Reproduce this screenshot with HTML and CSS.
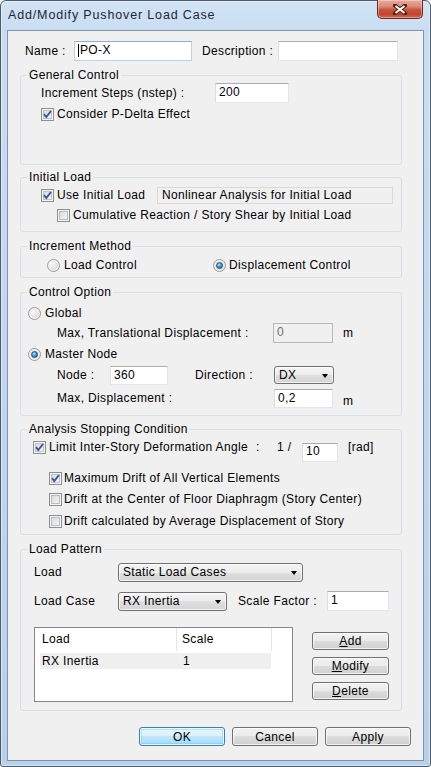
FILE: index.html
```html
<!DOCTYPE html>
<html>
<head>
<meta charset="utf-8">
<title>Add/Modify Pushover Load Case</title>
<link rel="stylesheet" href="styles.css">
</head>
<body>
<div class="window">
  <div class="titlebar">
    <span class="title">Add/Modify Pushover Load Case</span>
    <div class="close">
      <svg width="14" height="11" viewBox="0 0 14 11">
        <path d="M2 1.5 L12 9.5 M12 1.5 L2 9.5" stroke="#4a2019" stroke-width="4" stroke-linecap="square" fill="none"/>
        <path d="M2.5 2 L11.5 9 M11.5 2 L2.5 9" stroke="#ffffff" stroke-width="2" fill="none"/>
      </svg>
    </div>
  </div>

  <div class="client">
    <div class="row name-row">
      <span class="w-name">Name :</span>
      <div class="tb focus w-nameinput"><span class="caret"></span>PO-X</div>
      <span class="w-desc">Description :</span>
      <div class="tb w-descinput"></div>
    </div>

    <div class="group g1">
      <div class="legend">General Control</div>
      <div class="row mt1 pl20">
        <span class="w-steps">Increment Steps (nstep) :</span>
        <div class="tb w-stepsinput">200</div>
      </div>
      <div class="row mt1 pl20">
        <span class="cb checked"><svg width="11" height="11" viewBox="0 0 11 11"><path d="M2 5.2 L4.3 8 L9 2" stroke="#3b54a0" stroke-width="1.9" fill="none"/></svg></span>
        <span class="cbl">Consider P-Delta Effect</span>
      </div>
    </div>

    <div class="group g2">
      <div class="legend">Initial Load</div>
      <div class="row mt1 pl20">
        <span class="cb checked"><svg width="11" height="11" viewBox="0 0 11 11"><path d="M2 5.2 L4.3 8 L9 2" stroke="#3b54a0" stroke-width="1.9" fill="none"/></svg></span>
        <span class="cbl w-useinit">Use Initial Load</span>
        <div class="tb readonly w-initbox">Nonlinear Analysis for Initial Load</div>
      </div>
      <div class="row pl36">
        <span class="cb"></span>
        <span class="cbl">Cumulative Reaction / Story Shear by Initial Load</span>
      </div>
    </div>

    <div class="group g3">
      <div class="legend">Increment Method</div>
      <div class="row mt2 pl26">
        <div class="radio-item w-radio1">
          <span class="rb"></span><span class="rbl">Load Control</span>
        </div>
        <div class="radio-item">
          <span class="rb on"></span><span class="rbl tight">Displacement Control</span>
        </div>
      </div>
    </div>

    <div class="group g4">
      <div class="legend">Control Option</div>
      <div class="row mt4 pl7">
        <span class="rb"></span><span class="rbl">Global</span>
      </div>
      <div class="row pl36">
        <span class="w-maxtrans">Max, Translational Displacement :</span>
        <div class="tb disabled w-60">0</div>
        <span class="unit">m</span>
      </div>
      <div class="row mt1 pl7">
        <span class="rb on"></span><span class="rbl">Master Node</span>
      </div>
      <div class="row mt1 pl36">
        <span class="w-node">Node :</span>
        <div class="tb h19 w-nodeinput">360</div>
        <span class="w-dir">Direction :</span>
        <div class="dd h18 w-60"><span>DX</span><span class="arrow"></span></div>
      </div>
      <div class="row mt3 pl36">
        <span class="w-maxdisp">Max, Displacement :</span>
        <div class="tb h19 w-59 bottom">0,2</div>
        <span class="unit bottom">m</span>
      </div>
    </div>

    <div class="group g5">
      <div class="legend">Analysis Stopping Condition</div>
      <div class="row mt1 pl12">
        <span class="cb checked"><svg width="11" height="11" viewBox="0 0 11 11"><path d="M2 5.2 L4.3 8 L9 2" stroke="#3b54a0" stroke-width="1.9" fill="none"/></svg></span>
        <span class="cbl w-limit">Limit Inter-Story Deformation Angle</span>
        <span class="w-colon">:</span>
        <span class="w-ratio">1 /</span>
        <div class="tb h19 w-36 lowbox">10</div>
        <span class="unit">[rad]</span>
      </div>
      <div class="row mt11 pl28">
        <span class="cb checked"><svg width="11" height="11" viewBox="0 0 11 11"><path d="M2 5.2 L4.3 8 L9 2" stroke="#3b54a0" stroke-width="1.9" fill="none"/></svg></span>
        <span class="cbl">Maximum Drift of All Vertical Elements</span>
      </div>
      <div class="row mt1 pl28">
        <span class="cb"></span>
        <span class="cbl">Drift at the Center of Floor Diaphragm (Story Center)</span>
      </div>
      <div class="row mt2 pl28">
        <span class="cb"></span>
        <span class="cbl">Drift calculated by Average Displacement of Story</span>
      </div>
    </div>

    <div class="group g6">
      <div class="legend">Load Pattern</div>
      <div class="row mt6 pl13">
        <span class="w-lp">Load</span>
        <div class="dd w-185"><span>Static Load Cases</span><span class="arrow"></span></div>
      </div>
      <div class="row mt9 pl13">
        <span class="w-lp">Load Case</span>
        <div class="dd w-109"><span>RX Inertia</span><span class="arrow"></span></div>
        <span class="w-sf">Scale Factor :</span>
        <div class="tb w-62">1</div>
      </div>
      <div class="list-area">
        <div class="list">
          <div class="list-head">
            <div class="hcol hc1">Load</div>
            <div class="hcol hc2">Scale</div>
          </div>
          <div class="list-row">
            <span class="lc1">RX Inertia</span>
            <span class="lc2">1</span>
          </div>
        </div>
        <div class="list-buttons">
          <div class="btn small"><u>A</u>dd</div>
          <div class="btn small"><u>M</u>odify</div>
          <div class="btn small"><u>D</u>elete</div>
        </div>
      </div>
    </div>

    <div class="bottom-buttons">
      <div class="btn big default">OK</div>
      <div class="btn big">Cancel</div>
      <div class="btn big">Apply</div>
    </div>
  </div>
</div>
</body>
</html>
```

FILE: styles.css
```css
* { box-sizing: border-box; }
html, body { margin: 0; padding: 0; }
body {
  width: 431px;
  height: 767px;
  overflow: hidden;
  background: #ffffff;
  font-family: "Liberation Sans", Arial, sans-serif;
  font-size: 12px;
  letter-spacing: 0.35px;
  color: #000;
}

.window {
  width: 431px;
  height: 767px;
  border: 1px solid #4d5a69;
  border-radius: 6px 6px 3px 3px;
  background: linear-gradient(to bottom, #d2e3f5 0px, #c9ddf2 30px, #bfd5ed 60%, #b9d0ea 100%);
  box-shadow: inset 0 0 0 1px rgba(255, 255, 255, 0.45);
  display: flex;
  flex-direction: column;
}

.titlebar {
  height: 29px;
  flex: none;
  display: flex;
  align-items: flex-start;
  justify-content: space-between;
}
.title {
  margin-top: 7px;
  padding-left: 7px;
  line-height: 14px;
  font-size: 12.5px;
  letter-spacing: 0.85px;
  color: #1b2733;
}
.close {
  width: 46px;
  height: 19px;
  margin: -1px 7px 0 0;
  border: 1px solid #6e2a20;
  border-top: none;
  border-radius: 0 0 5px 5px;
  background: linear-gradient(to bottom, #e9aa9c 0%, #dc8b79 35%, #c9513b 55%, #c4442e 80%, #d06a52 100%);
  box-shadow: inset 0 0 0 1px rgba(255, 255, 255, 0.35);
  display: flex;
  align-items: center;
  justify-content: center;
}

.client {
  flex: 1;
  margin: 0 6px 5px 6px;
  border: 1px solid #8294a8;
  background: #f0f0f0;
  display: flex;
  flex-direction: column;
}

/* rows */
.row {
  display: flex;
  align-items: center;
  height: 20px;
  flex: none;
  white-space: nowrap;
}
.mt1 { margin-top: 1px; }
.mt2 { margin-top: 2px; }
.mt3 { margin-top: 3px; }
.mt4 { margin-top: 4px; }
.mt6 { margin-top: 6px; }
.mt9 { margin-top: 9px; }
.mt11 { margin-top: 11px; }
.pl7 { padding-left: 7px; }
.pl12 { padding-left: 12px; }
.pl13 { padding-left: 13px; }
.pl20 { padding-left: 20px; }
.pl26 { padding-left: 26px; }
.pl28 { padding-left: 28px; }
.pl36 { padding-left: 36px; }

.name-row { margin-top: 10px; padding-left: 17px; }
.w-name { width: 49px; }
.w-nameinput { width: 118px; }
.w-desc { width: 76px; margin-left: 10px; }
.w-descinput { width: 120px; }

/* group boxes */
.group {
  flex: none;
  margin-left: 12px;
  width: 382px;
  border: 1px solid #d5dfe5;
  border-radius: 3px;
}
.legend {
  margin: -8px 0 0 6px;
  padding: 0 2px;
  height: 14px;
  line-height: 14px;
  width: max-content;
  background: #f0f0f0;
}
.g1 { margin-top: 14px; height: 90px; }
.g2 { margin-top: 12px; height: 55px; }
.g3 { margin-top: 14px; height: 32px; }
.g4 { margin-top: 14px; height: 124px; }
.g5 { margin-top: 13px; height: 106px; }
.g6 { margin-top: 14px; height: 162px; }

/* text boxes */
.tb {
  height: 20px;
  flex: none;
  background: #ffffff;
  border: 1px solid #e2e6ec;
  border-top-color: #abadb3;
  border-left-color: #dbdfe6;
  padding: 1px 0 0 3px;
  line-height: 14px;
  overflow: hidden;
}
.tb.h19 { height: 19px; }
.tb.focus {
  border-color: #b9d4ea;
  border-top-color: #8db0d0;
}
.tb.readonly {
  height: 17px;
  background: #f0f0f0;
  border-color: #dadada;
  line-height: 14px;
  padding: 0 0 0 4px;
}
.tb.disabled {
  background: #f0f0f0;
  border-color: #b5b8bc;
  color: #6d6d6d;
}
.caret {
  display: inline-block;
  width: 1px;
  height: 13px;
  background: #000;
  vertical-align: top;
  margin-right: 1px;
  margin-top: 1px;
}
.bottom { align-self: flex-end; }
.lowbox { align-self: flex-start; margin-top: 6px; padding-top: 0; }

.w-steps { width: 174px; }
.w-stepsinput { width: 74px; }
.w-useinit { width: 100px; }
.w-initbox { width: 236px; }
.w-60 { width: 60px; }
.w-59 { width: 59px; }
.w-36 { width: 36px; }
.w-62 { width: 62px; }
.w-185 { width: 185px; }
.w-109 { width: 109px; }
.w-maxtrans { width: 216px; }
.w-maxdisp { width: 217px; }
.w-node { width: 53px; }
.w-nodeinput { width: 58px; }
.w-dir { width: 79px; margin-left: 27px; }
.w-limit { width: 207px; }
.w-colon { width: 21px; }
.w-ratio { width: 25px; }
.w-lp { width: 84px; }
.w-sf { width: 89px; margin-left: 11px; }
.unit { margin-left: 10px; }

/* checkbox */
.cb {
  width: 13px;
  height: 13px;
  flex: none;
  border: 1px solid #8e8f8f;
  background: linear-gradient(135deg, #cfd3d8 0%, #e6e8ea 50%, #fbfbfb 100%);
  box-shadow: inset 0 0 0 1px #f4f4f4, inset 0 0 0 2px #b8bdc3;
  display: flex;
  align-items: center;
  justify-content: center;
}
.cb.checked { box-shadow: inset 0 0 0 1px #f4f4f4, inset 0 0 0 2px #c0c5cb; }
.cb svg { display: block; }
.cbl { margin-left: 3px; }
.g5 .pl28 .cbl { margin-left: 2px; }

/* radio */
.radio-item { display: flex; align-items: center; }
.w-radio1 { width: 166px; }
.rb {
  width: 13px;
  height: 13px;
  flex: none;
  border-radius: 50%;
  border: 1px solid #9a9b9c;
  background: radial-gradient(circle at 35% 35%, #f8f8f8 0%, #e2e2e2 55%, #cdcdcd 100%);
  box-shadow: inset 0 0 0 1px #f4f4f4;
  display: flex;
  align-items: center;
  justify-content: center;
}
.rb.on::after {
  content: "";
  width: 7px;
  height: 7px;
  border-radius: 50%;
  border: 1px solid #1b4f7a;
  box-sizing: border-box;
  background: radial-gradient(circle at 40% 35%, #bfeaff 0%, #46a4dc 40%, #0f5b93 100%);
}
.rbl { margin-left: 4px; }
.rbl.tight { margin-left: 3px; }

/* dropdown */
.dd {
  height: 19px;
  flex: none;
  border: 1px solid #707070;
  border-radius: 3px;
  background: linear-gradient(to bottom, #f4f4f4 0%, #ececec 50%, #dfdfdf 50%, #d4d4d4 100%);
  box-shadow: inset 0 0 0 1px rgba(255, 255, 255, 0.7);
  display: flex;
  align-items: center;
  justify-content: space-between;
  padding: 0 5px 0 4px;
  line-height: 13px;
}
.dd.h18 { height: 18px; }
.arrow {
  width: 0;
  height: 0;
  border-left: 3.5px solid transparent;
  border-right: 3.5px solid transparent;
  border-top: 4px solid #000;
  margin-top: 1px;
}

/* list */
.list-area {
  display: flex;
  margin-top: 16px;
  padding-left: 13px;
}
.list {
  width: 259px;
  height: 75px;
  border: 1px solid #828790;
  background: #ffffff;
}
.list-head {
  display: flex;
  height: 23px;
}
.hcol {
  height: 23px;
  line-height: 23px;
  border-right: 1px solid #e3e5e8;
}
.hc1 { width: 142px; padding-left: 7px; }
.hc2 { width: 95px; padding-left: 5px; }
.list-row {
  margin: 2px 0 0 5px;
  width: 231px;
  height: 16px;
  line-height: 16px;
  background: #efefef;
  display: flex;
}
.lc1 { width: 143px; padding-left: 2px; }
.list-buttons {
  margin-left: 19px;
  padding-top: 5px;
  display: flex;
  flex-direction: column;
  gap: 7px;
}

/* buttons */
.btn {
  border: 1px solid #707070;
  border-radius: 3px;
  background: linear-gradient(to bottom, #f2f2f2 0%, #ebebeb 50%, #dddddd 50%, #cfcfcf 100%);
  box-shadow: inset 0 0 0 1px rgba(255, 255, 255, 0.75);
  text-align: center;
  display: flex;
  align-items: center;
  justify-content: center;
}
.btn u { text-decoration: underline; text-underline-offset: 1px; }
.btn.small { width: 77px; height: 18px; }
.btn.big { width: 86px; height: 19px; }
.btn.default {
  border-color: #3c7fb1;
  background: linear-gradient(to bottom, #eaf6fd 0%, #d9f0fc 50%, #bee6fd 50%, #a7d9f5 100%);
  box-shadow: inset 0 0 0 1px rgba(255, 255, 255, 0.8), inset 0 0 0 2px rgba(96, 200, 253, 0.4);
}
.bottom-buttons {
  flex: none;
  margin-top: 16px;
  display: flex;
  justify-content: flex-end;
  gap: 7px;
  padding-right: 12px;
}
```
